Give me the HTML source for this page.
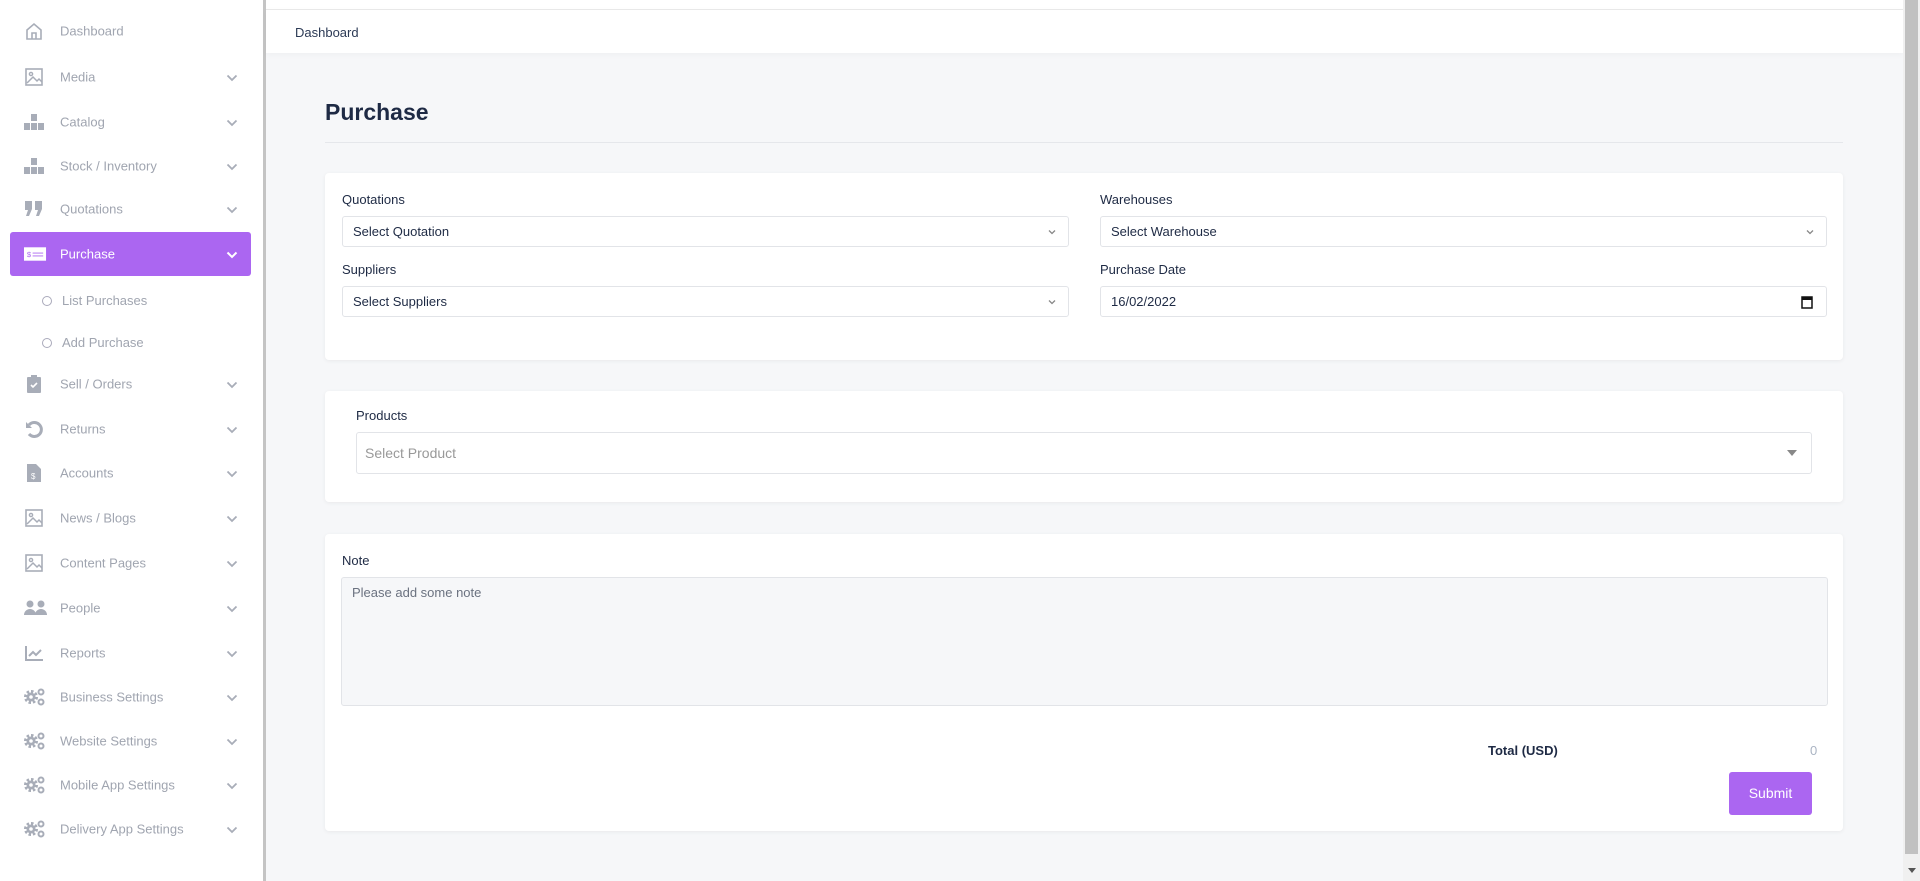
<!DOCTYPE html>
<html><head><meta charset="utf-8">
<style>
*{box-sizing:border-box;margin:0;padding:0}
body{width:1920px;height:881px;overflow:hidden;background:#f6f7f9;font-family:"Liberation Sans",sans-serif;position:relative;color:#1e2a44}
.side{position:absolute;left:0;top:0;width:266px;height:881px;background:#fff;border-right:3px solid #c4c4c4}
.it{position:absolute;left:10px;width:241px;height:44px;font-size:13px;color:#a0a5b0}
.it .ic{position:absolute;left:14px;top:13px;width:20px;height:18px}
.it .tx{position:absolute;left:50px;top:50%;transform:translateY(-50%)}
.it .ch{position:absolute;left:216px;top:19px;width:12px;height:8px}
.act{background:#ab66f1;border-radius:3px;color:#fff}
.sub{position:absolute;left:42px;font-size:13px;color:#a0a5b0}
.sub i{display:inline-block;width:10px;height:10px;border:1px solid #aab;border-radius:50%;margin-right:10px;vertical-align:-1px}
.top{position:absolute;left:266px;top:0;width:1637px;height:10px;background:#fff}
.hdr{position:absolute;left:266px;top:9px;width:1637px;height:44px;background:#fff;border-top:1px solid #e8e8e8;box-shadow:0 2px 6px rgba(0,0,0,.03)}
.hdr span{position:absolute;left:29px;top:15px;font-size:13px;color:#2c3a55}
h1{position:absolute;left:325px;top:99px;font-size:23px;font-weight:bold;color:#1e2a44}
.hr{position:absolute;left:325px;top:142px;width:1518px;height:1px;background:#e5e7eb}
.card{position:absolute;left:325px;width:1518px;background:#fff;border-radius:4px;box-shadow:0 1px 4px rgba(0,0,0,.06)}
.lb{position:absolute;font-size:13px;color:#1e2a44}
.inp{position:absolute;height:31px;border:1px solid #e2e4e8;border-radius:3px;font-size:13px;color:#1e2a44;padding-left:10px;line-height:29px;background:#fff}
.inp .ar{position:absolute;right:12px;top:12px;width:8px;height:6px}
.scr{position:absolute;left:1903px;top:0;width:17px;height:881px;background:#f0f0f0}
.scr .th{position:absolute;left:2px;top:0;width:13px;height:854px;background:#c1c1c1}
</style></head><body>
<div class="side">
<svg width="0" height="0" style="position:absolute"><defs>
<symbol id="chev" viewBox="0 0 12 8"><path d="M1.5 1.5 6 6l4.5-4.5" fill="none" stroke="#a8adb8" stroke-width="1.8"/></symbol>
<symbol id="sc" viewBox="0 0 8 6"><path d="M1 1.5 4 4.5 7 1.5" fill="none" stroke="#888" stroke-width="1.3"/></symbol>
<symbol id="img" viewBox="0 0 20 18"><rect x="2" y="1" width="16" height="16" fill="none" stroke="#a8adb8" stroke-width="1.6"/><circle cx="7" cy="6" r="1.6" fill="none" stroke="#a8adb8" stroke-width="1.4"/><path d="M3 15l6-6 4 4 2-2 3 3" fill="none" stroke="#a8adb8" stroke-width="1.5"/></symbol>
<symbol id="box" viewBox="0 0 20 18"><rect x="7" y="1" width="6" height="7" fill="#a8adb8"/><rect x="0" y="10" width="6" height="7" fill="#a8adb8"/><rect x="7" y="10" width="6" height="7" fill="#a8adb8"/><rect x="14" y="10" width="6" height="7" fill="#a8adb8"/></symbol>
<symbol id="gear" viewBox="0 0 22 18"><circle cx="7" cy="9" r="5" fill="none" stroke="#a8adb8" stroke-width="4" stroke-dasharray="2.2 1.7"/><circle cx="7" cy="9" r="4.5" fill="#a8adb8"/><circle cx="7" cy="9" r="1.8" fill="#fff"/><circle cx="17" cy="4" r="2.5" fill="none" stroke="#a8adb8" stroke-width="2"/><circle cx="17" cy="14" r="2.5" fill="none" stroke="#a8adb8" stroke-width="2"/></symbol>
</defs></svg>
<div class="it" style="top:9px"><svg class="ic" viewBox="0 0 20 18"><path d="M3 8 10 2l7 6v9H3z M8 17v-6h4v6" fill="none" stroke="#a8adb8" stroke-width="1.6"/></svg><span class="tx">Dashboard</span></div>
<div class="it" style="top:55px"><svg class="ic"><use href="#img"/></svg><span class="tx">Media</span><svg class="ch"><use href="#chev"/></svg></div>
<div class="it" style="top:100px"><svg class="ic"><use href="#box"/></svg><span class="tx">Catalog</span><svg class="ch"><use href="#chev"/></svg></div>
<div class="it" style="top:144px"><svg class="ic"><use href="#box"/></svg><span class="tx">Stock / Inventory</span><svg class="ch"><use href="#chev"/></svg></div>
<div class="it" style="top:187px"><svg class="ic" viewBox="0 0 20 18"><path d="M1 1h7v8l-3 7H2l2-6H1z M11 1h7v8l-3 7h-3l2-6h-3z" fill="#a8adb8"/></svg><span class="tx">Quotations</span><svg class="ch"><use href="#chev"/></svg></div>
<div class="it act" style="top:232px"><svg class="ic" viewBox="0 0 24 18" style="width:23px"><rect x="0" y="2" width="23" height="14" fill="#fff"/><text x="3" y="12" font-size="8" fill="#ab66f1" font-family="Liberation Sans">$</text><path d="M9 8h11M9 11h11" stroke="#ab66f1"/></svg><span class="tx" style="color:#fff">Purchase</span><svg class="ch" viewBox="0 0 12 8"><path d="M1.5 1.5 6 6l4.5-4.5" fill="none" stroke="#fff" stroke-width="2"/></svg></div>
<div class="sub" style="top:293px"><i></i>List Purchases</div>
<div class="sub" style="top:335px"><i></i>Add Purchase</div>
<div class="it" style="top:362px"><svg class="ic" viewBox="0 0 20 18"><rect x="3" y="2" width="14" height="16" rx="1" fill="#a8adb8"/><rect x="7" y="0" width="6" height="4" fill="#a8adb8"/><path d="M7 10l2 2 4-4" stroke="#fff" stroke-width="1.6" fill="none"/></svg><span class="tx">Sell / Orders</span><svg class="ch"><use href="#chev"/></svg></div>
<div class="it" style="top:407px"><svg class="ic" viewBox="0 0 20 18"><path d="M5 5a7 7 0 1 1 0 9" fill="none" stroke="#a8adb8" stroke-width="3"/><path d="M2 2v6h6z" fill="#a8adb8"/></svg><span class="tx">Returns</span><svg class="ch"><use href="#chev"/></svg></div>
<div class="it" style="top:451px"><svg class="ic" viewBox="0 0 20 18"><path d="M3 0h9l5 5v13H3z" fill="#a8adb8"/><text x="7" y="15" font-size="8" fill="#fff" font-family="Liberation Sans">$</text></svg><span class="tx">Accounts</span><svg class="ch"><use href="#chev"/></svg></div>
<div class="it" style="top:496px"><svg class="ic"><use href="#img"/></svg><span class="tx">News / Blogs</span><svg class="ch"><use href="#chev"/></svg></div>
<div class="it" style="top:541px"><svg class="ic"><use href="#img"/></svg><span class="tx">Content Pages</span><svg class="ch"><use href="#chev"/></svg></div>
<div class="it" style="top:586px"><svg class="ic" viewBox="0 0 24 18" style="width:24px"><circle cx="6" cy="5" r="3.5" fill="#a8adb8"/><circle cx="17" cy="5" r="3.5" fill="#a8adb8"/><path d="M0 16a6 6 0 0 1 12 0zM11 16a6 6 0 0 1 12 0z" fill="#a8adb8"/></svg><span class="tx">People</span><svg class="ch"><use href="#chev"/></svg></div>
<div class="it" style="top:631px"><svg class="ic" viewBox="0 0 20 18"><path d="M2 2v14h17" fill="none" stroke="#a8adb8" stroke-width="2"/><path d="M5 12l4-4 3 3 5-5" fill="none" stroke="#a8adb8" stroke-width="2"/></svg><span class="tx">Reports</span><svg class="ch"><use href="#chev"/></svg></div>
<div class="it" style="top:675px"><svg class="ic" viewBox="0 0 22 18" style="width:22px"><use href="#gear"/></svg><span class="tx">Business Settings</span><svg class="ch"><use href="#chev"/></svg></div>
<div class="it" style="top:719px"><svg class="ic" viewBox="0 0 22 18" style="width:22px"><use href="#gear"/></svg><span class="tx">Website Settings</span><svg class="ch"><use href="#chev"/></svg></div>
<div class="it" style="top:763px"><svg class="ic" viewBox="0 0 22 18" style="width:22px"><use href="#gear"/></svg><span class="tx">Mobile App Settings</span><svg class="ch"><use href="#chev"/></svg></div>
<div class="it" style="top:807px"><svg class="ic" viewBox="0 0 22 18" style="width:22px"><use href="#gear"/></svg><span class="tx">Delivery App Settings</span><svg class="ch"><use href="#chev"/></svg></div>
</div>

<div class="top"></div>
<div class="hdr"><span>Dashboard</span></div>
<h1>Purchase</h1>
<div class="hr"></div>

<div class="card" style="top:173px;height:187px">
<div class="lb" style="left:17px;top:19px">Quotations</div>
<div class="inp" style="left:17px;top:43px;width:727px">Select Quotation<svg class="ar"><use href="#sc"/></svg></div>
<div class="lb" style="left:17px;top:89px">Suppliers</div>
<div class="inp" style="left:17px;top:113px;width:727px">Select Suppliers<svg class="ar"><use href="#sc"/></svg></div>
<div class="lb" style="left:775px;top:19px">Warehouses</div>
<div class="inp" style="left:775px;top:43px;width:727px">Select Warehouse<svg class="ar"><use href="#sc"/></svg></div>
<div class="lb" style="left:775px;top:89px">Purchase Date</div>
<div class="inp" style="left:775px;top:113px;width:727px">16/02/2022<svg style="position:absolute;right:13px;top:8px" width="12" height="14" viewBox="0 0 12 14"><rect x="1" y="2" width="10" height="11" fill="none" stroke="#111" stroke-width="1.5"/><rect x="1" y="2" width="10" height="3" fill="#111"/></svg></div>
</div>

<div class="card" style="top:391px;height:111px">
<div class="lb" style="left:31px;top:17px">Products</div>
<div class="inp" style="left:31px;top:41px;width:1456px;height:42px;line-height:40px;color:#999;font-size:14px;padding-left:8px">Select Product<svg style="position:absolute;right:14px;top:17px" width="10" height="6" viewBox="0 0 10 6"><path d="M0 0h10L5 6z" fill="#888"/></svg></div>
</div>

<div class="card" style="top:534px;height:297px">
<div class="lb" style="left:17px;top:19px">Note</div>
<div class="inp" style="left:16px;top:43px;width:1487px;height:129px;background:#f6f7f9;line-height:20px;padding-top:5px;color:#6b7280">Please add some note</div>
<div class="lb" style="left:1163px;top:209px;font-weight:bold;font-size:13px">Total (USD)</div>
<div class="lb" style="left:1485px;top:209px;color:#aab4c3">0</div>
<div style="position:absolute;left:1404px;top:238px;width:83px;height:43px;background:#ab66f1;border-radius:3px;color:#fff;font-size:14px;text-align:center;line-height:43px">Submit</div>
</div>

<div class="scr"><div class="th"></div><div style="position:absolute;left:5px;top:868px;border-left:4px solid transparent;border-right:4px solid transparent;border-top:5px solid #555"></div></div>
</body></html>
